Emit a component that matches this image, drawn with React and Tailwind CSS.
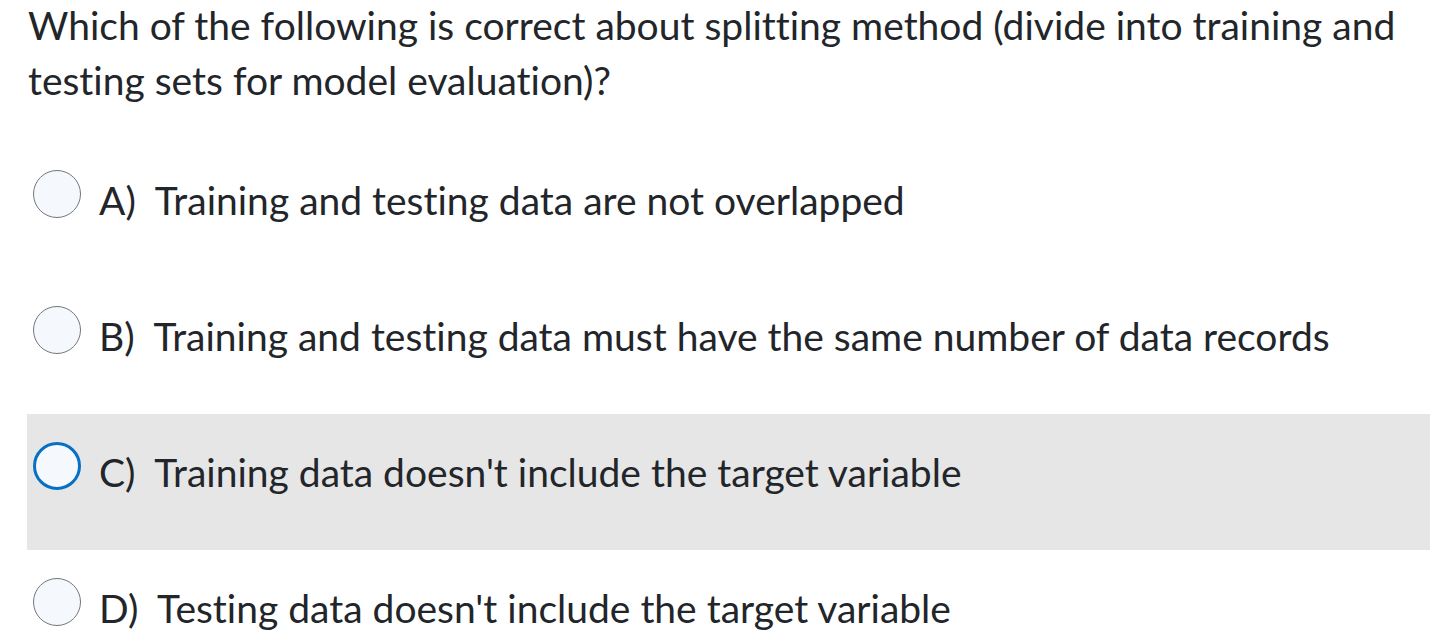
import React from "react";

const options = [
  { id: "A", text: "Training and testing data are not overlapped" },
  { id: "B", text: "Training and testing data must have the same number of data records" },
  { id: "C", text: "Training data doesn't include the target variable", hovered: true },
  { id: "D", text: "Testing data doesn't include the target variable" },
];

const App = () => {
  return (
    <div className="w-[1430px] h-[640px] overflow-hidden bg-white text-[#222529] font-['Lato','Noto_Sans',sans-serif] [font-variant-ligatures:none]">
      <p className="-mt-[2px] pl-[28px] pr-[20px] text-[39px] leading-[55px]">
        Which of the following is correct about splitting method (divide into training and
        testing sets for model evaluation)?
      </p>

      <div className="mt-[34px] ml-[27px]">
        {options.map((opt) => (
          <label
            key={opt.id}
            className={`flex items-start h-[136px] pt-[28px] pl-[6px] ${opt.hovered ? "bg-[#e6e6e6]" : ""}`}
          >
            <span
              className={`w-[48px] h-[48px] rounded-full flex-none bg-[#f5f9fe] ${
                opt.hovered ? "border-[3px] border-[#0770c4]" : "border-[1.5px] border-[#73777b]"
              }`}
            />
            <span className="ml-[18px] mt-[6px] text-[39px] leading-[48px] whitespace-pre">
              {opt.id})  {opt.text}
            </span>
          </label>
        ))}
      </div>
    </div>
  );
};

export default App;
